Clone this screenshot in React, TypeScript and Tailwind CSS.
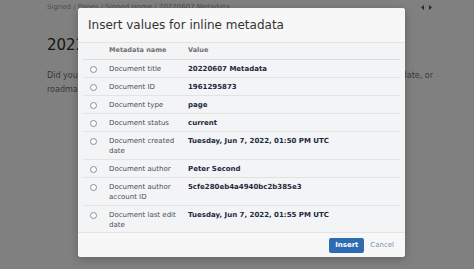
import React from "react";

type Row = { name: string; value: string };

const rows: Row[] = [
	{ name: "Document title", value: "20220607 Metadata" },
	{ name: "Document ID", value: "1961295873" },
	{ name: "Document type", value: "page" },
	{ name: "Document status", value: "current" },
	{ name: "Document created date", value: "Tuesday, Jun 7, 2022, 01:50 PM UTC" },
	{ name: "Document author", value: "Peter Second" },
	{ name: "Document author account ID", value: "5cfe280eb4a4940bc2b385e3" },
	{ name: "Document last edit date", value: "Tuesday, Jun 7, 2022, 01:55 PM UTC" },
];

const Radio = () => (
	<span className="block w-[7px] h-[7px] rounded-full border border-[#8c8c8c] bg-white" />
);

const ExpandIcon = () => (
	<svg width="11" height="5" viewBox="0 0 11 5" fill="#2a2a2a">
		<path d="M0 2.5 L3 0 V5 Z" />
		<path d="M11 2.5 L8 0 V5 Z" />
	</svg>
);

export default function App() {
	return (
		<div
			className="relative w-full h-[269px] overflow-hidden bg-[#808080]"
			style={{ fontFamily: '"DejaVu Sans", sans-serif' }}
		>
			{/* page behind the overlay */}
			<div className="px-[47px] pt-[2px] w-[474px]">
				<div className="flex items-center justify-between text-[7px] leading-[10px] text-[#4f4f4f]">
					<span>Signed / Pages / Signed Home / 20220607 Metadata</span>
					<span className="mr-[-5px]">
						<ExpandIcon />
					</span>
				</div>
				<h1 className="mt-[23px] text-[15px] leading-[20px] text-[#161616]">
					20220607 Metadata
				</h1>
				<div className="mt-[14px] text-[8px] leading-[14px] text-[#383838]">
					<div className="flex whitespace-nowrap mr-[-6px]">
						<span className="min-w-0 overflow-hidden">
							Did you know you can insert inline metadata into a page,
						</span>
						<span className="ml-auto shrink-0">template, or</span>
					</div>
					<div>roadmap to keep track of details?</div>
				</div>
			</div>

			{/* modal */}
			<div className="absolute left-[78px] top-[8px] w-[327px] h-[249px] flex flex-col rounded-[3px] overflow-hidden bg-[#f3f4f5] shadow-[0_2px_8px_rgba(0,0,0,0.25)]">
				<div className="h-[35px] shrink-0 flex items-center px-[10px] bg-[#f7f7f7] border-b border-[#e3e3e3] text-[12px] text-[#333333]">
					Insert values for inline metadata
				</div>

				<div className="flex-1 overflow-hidden px-[5px]">
					<div className="grid grid-cols-[26px_79px_1fr] h-[17px] items-center border-b border-[#dedede] text-[6.5px] font-bold text-[#707070]">
						<span />
						<span>Metadata name</span>
						<span>Value</span>
					</div>
					{rows.map((r, i) => (
						<div
							key={i}
							className="grid grid-cols-[26px_79px_1fr] pt-[4px] pb-[3px] border-b border-[#e3e3e3] text-[7px] leading-[10px]"
						>
							<span className="pl-[7px] pt-[1.5px]">
								<Radio />
							</span>
							<span className="pr-[4px] text-[#4a4f58]">{r.name}</span>
							<span className="font-bold text-[#1d2940]">{r.value}</span>
						</div>
					))}
				</div>

				<div className="h-[25px] shrink-0 flex items-center justify-end gap-[6px] px-[11px] bg-[#f7f7f7] border-t border-[#e3e3e3]">
					<button className="w-[35px] h-[15px] rounded-[2px] bg-[#2e6cb2] text-white text-[7px] font-bold">
						Insert
					</button>
					<button className="text-[7px] text-[#7b92b3]">Cancel</button>
				</div>
			</div>
		</div>
	);
}
